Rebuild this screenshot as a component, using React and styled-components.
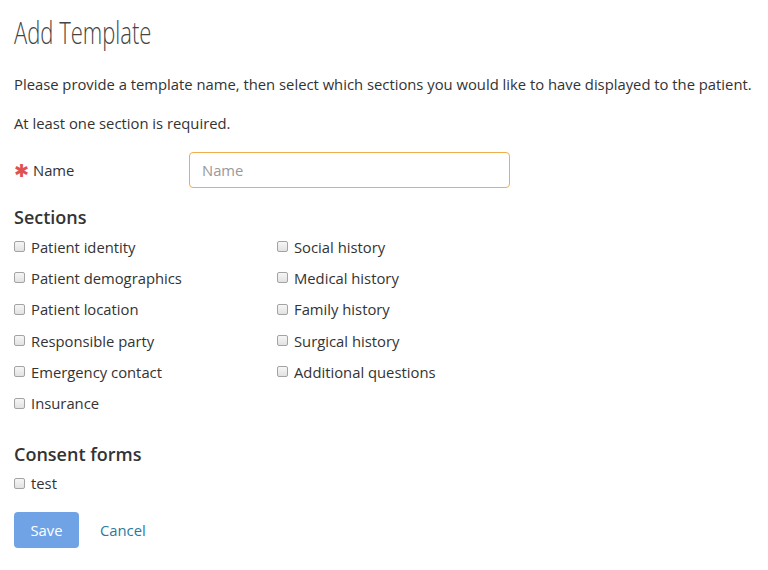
import React from 'react'
import styled, { createGlobalStyle } from 'styled-components'

const GlobalStyle = createGlobalStyle`
  body {
    margin: 0;
    background: #fff;
    font-family: "Open Sans", "Noto Sans", sans-serif;
    color: #333;
  }
`

const Page = styled.div`
  padding: 12px 14px 0 14px;
`

const Title = styled.h1`
  margin: 0 0 22px 0;
  font-weight: 300;
  font-size: 31px;
  line-height: 40px;
  color: #444;
`

// no condensed face installed, so squeeze the light face
const Narrow = styled.span`
  display: inline-block;
  transform: scaleX(0.71);
  transform-origin: left center;
`

const Text = styled.p`
  margin: 0 0 18px 0;
  font-size: 14.8px;
  line-height: 21px;
`

const FieldRow = styled.div`
  display: flex;
  align-items: center;
  margin-top: 8px;
`

const Label = styled.label`
  width: 175px;
  font-size: 14.8px;
  display: flex;
  align-items: center;
  gap: 4px;
`

const Star = styled.span`
  color: #e0524f;
  font-size: 18px;
  line-height: 1;
`

const Input = styled.input`
  width: 321px;
  height: 36px;
  box-sizing: border-box;
  border: 1px solid #f0ad4e;
  border-radius: 4px;
  padding: 0 12px;
  font-family: inherit;
  font-size: 14.8px;
  color: #333;
  outline: none;
  &::placeholder {
    color: #999;
  }
`

const Heading = styled.h2`
  margin: ${({ top }) => top}px 0 ${({ bottom }) => bottom}px 0;
  font-size: 18px;
  font-weight: 600;
  line-height: 24px;
  color: #333;
`

const Columns = styled.div`
  display: grid;
  grid-template-columns: 263px 1fr;
`

const Column = styled.div`
  display: flex;
  flex-direction: column;
`

const CheckRow = styled.label`
  display: flex;
  align-items: center;
  gap: 6px;
  height: 31.3px;
  font-size: 14.8px;
  color: #333;
`

const Box = styled.span`
  width: 11px;
  height: 11px;
  box-sizing: border-box;
  border: 1px solid #a3a3a3;
  border-radius: 2px;
  background: linear-gradient(#f6f6f6, #e2e2e2);
  flex-shrink: 0;
`

const Actions = styled.div`
  display: flex;
  align-items: center;
  gap: 21px;
  margin-top: 13px;
`

const SaveButton = styled.button`
  width: 65px;
  height: 36px;
  border: none;
  border-radius: 4px;
  background: #6fa3e6;
  color: #fff;
  font-family: inherit;
  font-size: 14.8px;
`

const LinkButton = styled.button`
  border: none;
  background: none;
  padding: 0;
  color: #2a7a9e;
  font-family: inherit;
  font-size: 14.8px;
`

const Check = ({ children }) => (
  <CheckRow>
    <Box />
    {children}
  </CheckRow>
)

const left = ['Patient identity', 'Patient demographics', 'Patient location', 'Responsible party', 'Emergency contact', 'Insurance']
const right = ['Social history', 'Medical history', 'Family history', 'Surgical history', 'Additional questions']

export default function App() {
  return (
    <Page>
      <GlobalStyle />
      <Title><Narrow>Add Template</Narrow></Title>
      <Text>Please provide a template name, then select which sections you would like to have displayed to the patient.</Text>
      <Text>At least one section is required.</Text>
      <FieldRow>
        <Label><Star>✱</Star>Name</Label>
        <Input placeholder="Name" />
      </FieldRow>
      <Heading top={17} bottom={2}>Sections</Heading>
      <Columns>
        <Column>
          {left.map((item) => <Check key={item}>{item}</Check>)}
        </Column>
        <Column>
          {right.map((item) => <Check key={item}>{item}</Check>)}
        </Column>
      </Columns>
      <Heading top={23} bottom={2}>Consent forms</Heading>
      <Check>test</Check>
      <Actions>
        <SaveButton>Save</SaveButton>
        <LinkButton>Cancel</LinkButton>
      </Actions>
    </Page>
  )
}
